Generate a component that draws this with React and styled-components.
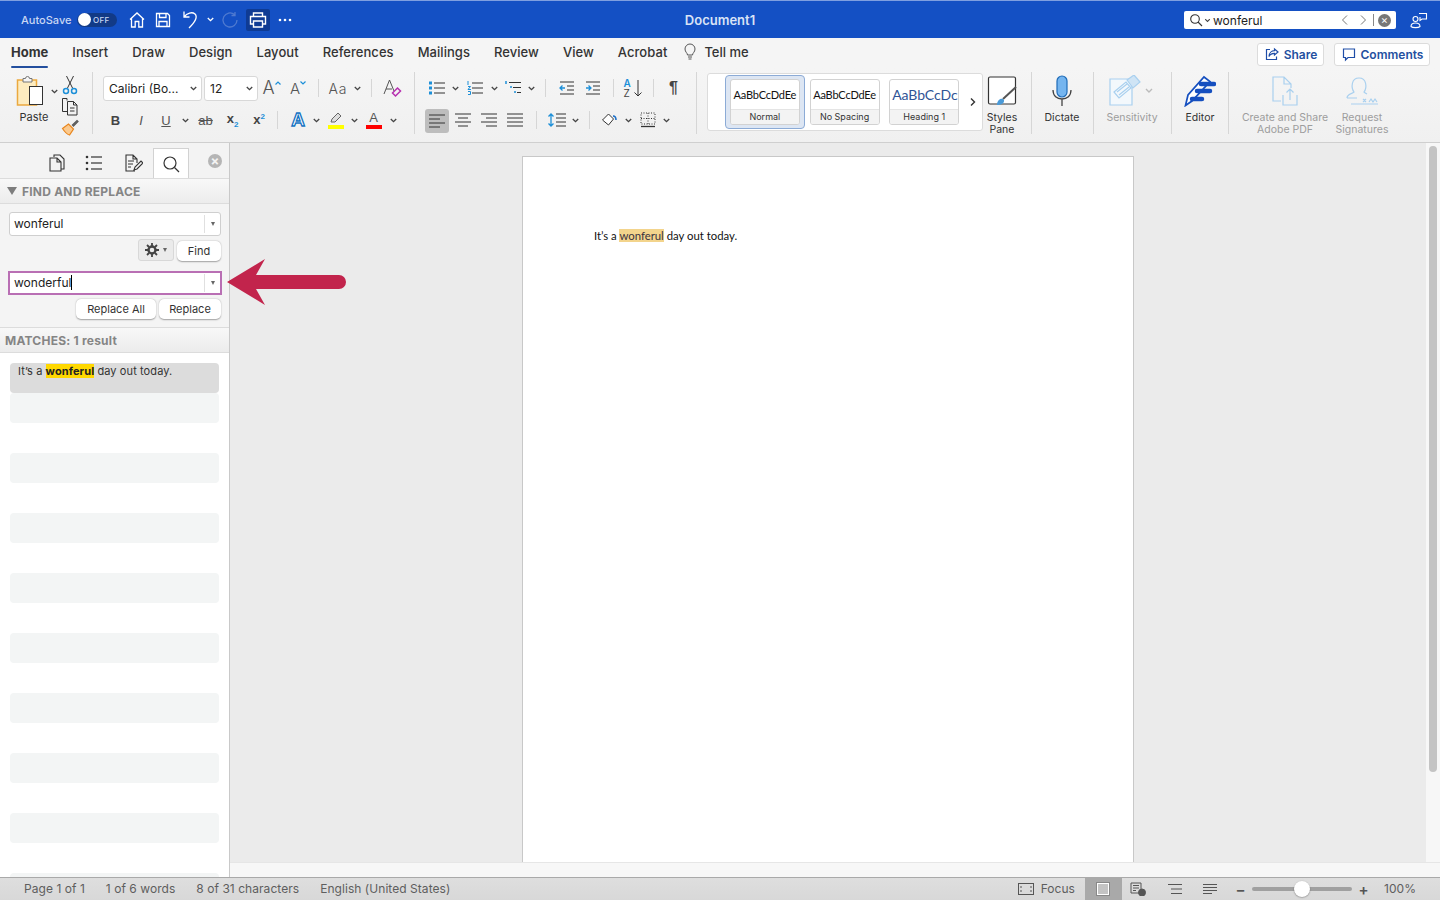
import React from "react";
import styled, { createGlobalStyle } from "styled-components";

const GlobalStyle = createGlobalStyle`
  html, body { margin: 0; height: 100%; overflow: hidden; }
  body { font-family: Inter, "Open Sans", sans-serif; color: #2b2b2b; }
  * { box-sizing: border-box; }
  svg { flex: none; }
`;

const Chev = ({ color = "#444" }) => (
  <svg width="7" height="5" viewBox="0 0 9 6"><path d="M1 1l3.500 3.500L8 1" fill="none" stroke={color} strokeWidth="1.700" /></svg>
);

const Ico = ({ w = 20, h = 20, children, stroke = "#333", sw = 1.2 }) => (
  <svg width={w} height={h} viewBox={`0 0 ${w} ${h}`} fill="none" stroke={stroke} strokeWidth={sw}>{children}</svg>
);

const lines = (ys, x1, x2, color) => ys.map((y, i) => <path key={i} d={`M${Array.isArray(x1) ? x1[i] : x1} ${y}H${Array.isArray(x2) ? x2[i] : x2}`} stroke={color} />);

const tabs = ["Home", "Insert", "Draw", "Design", "Layout", "References", "Mailings", "Review", "View", "Acrobat"];

export default function App() {
  return (
    <Screen>
      <GlobalStyle />
      <TitleBar>
        <AutoSave>AutoSave</AutoSave>
        <Toggle><Knob /><ToggleText>OFF</ToggleText></Toggle>
        <TitleTool $w={26} $ml={7}>
          <Ico stroke="#fff" sw={1.3}><path d="M3 9.500L10 3l7 6.500M4.500 8.500V17h3.700v-5.500h3.600V17h3.700V8.500" /></Ico>
        </TitleTool>
        <TitleTool $w={26}>
          <Ico stroke="#fff" sw={1.3}><path d="M3.500 3.500h11l2 2v11h-13zM6.500 3.500v4h6.500v-4M6 16.500v-5h8v5" /></Ico>
        </TitleTool>
        <TitleTool $w={30}>
          <Ico stroke="#fff" sw={1.3}><path d="M3 1.500V7h5.500M3 7c3-4 8-5.500 11-3 3 3 0 8-6 14" /></Ico>
        </TitleTool>
        <TitleTool $w={8}><Chev color="#fff" /></TitleTool>
        <TitleTool $w={32}>
          <Ico stroke="#4f7ad0" sw={1.3}><path d="M17 10a7 7 0 1 1-2.500-5.400M15 2v3.500h-3.500" /></Ico>
        </TitleTool>
        <PrintBtn>
          <Ico stroke="#fff" sw={1.4}><path d="M5.500 6V3h9v3M5 14H2.500V6.500h15V14H15M5.500 11h9v6h-9z" /></Ico>
        </PrintBtn>
        <Dots>
          <Ico w={14} h={4} stroke="none"><circle cx="2" cy="2" r="1.300" fill="#fff" /><circle cx="7" cy="2" r="1.300" fill="#fff" /><circle cx="12" cy="2" r="1.300" fill="#fff" /></Ico>
        </Dots>
        <DocTitle>Document1</DocTitle>
        <TopSearch>
          <Ico w={14} h={14} stroke="#333" sw={1.1}><circle cx="6" cy="6" r="4.300" /><path d="M9 9l4 4" /></Ico>
          <SearchChev><Chev /></SearchChev>
          <SearchText>wonferul</SearchText>
          <Ico w={10} h={12} stroke="#777" sw={1}><path d="M7 1.500L2.500 6 7 10.500" /></Ico>
          <SearchNext><Ico w={10} h={12} stroke="#777" sw={1}><path d="M3 1.500L7.500 6 3 10.500" /></Ico></SearchNext>
          <SearchSep />
          <SearchClear>×</SearchClear>
        </TopSearch>
        <PeopleIcon>
          <Ico w={18} h={18} stroke="#fff" sw={1.1}><circle cx="5.500" cy="8" r="2.500" /><path d="M1 15.500c0-2.500 2-3.500 4.500-3.500s4.500 1 4.500 3.500c-1.500 1.500-7.500 1.500-9 0zM9 2.500h7.500V8H12l-2 1.500V6" /></Ico>
        </PeopleIcon>
      </TitleBar>

      <TabBar>
        {tabs.map((t, i) => <Tab key={t} $active={i === 0}>{t}</Tab>)}
        <TellMe>
          <Ico w={14} h={18} stroke="#555" sw={1}><path d="M4.500 12c0-2-2.500-3-2.500-6a5 5 0 0 1 10 0c0 3-2.500 4-2.500 6zM5 14h4M5.500 16h3" /></Ico>
          <span>Tell me</span>
        </TellMe>
        <TabActions>
          <ActionBtn $w={67}>
            <Ico w={16} h={16} stroke="#1f4ea8" sw={1.2}><path d="M10.500 3l3.500 3-3.500 3V7.300C8 7.300 6 8.500 5 10.500 5 7 7.500 4.800 10.500 4.700zM6 3.500H2.500v10h10v-3" /></Ico>
            Share
          </ActionBtn>
          <ActionBtn $w={96}>
            <Ico w={16} h={16} stroke="#1f4ea8" sw={1.2}><path d="M2.500 3h11v8.500H7L4.500 14v-2.500h-2z" /></Ico>
            Comments
          </ActionBtn>
        </TabActions>
      </TabBar>

      <Ribbon>
        <Group $w={93}>
          <PasteWrap>
            <PasteMain>
              <svg width="32" height="32" viewBox="0 0 32 32" fill="none">
                <rect x="1.500" y="5" width="19" height="25" fill="#fdecc0" stroke="#eba93f" strokeWidth="1.500" />
                <path d="M7 5V3.500h2.500a2 2 0 0 1 4 0H16V7H7z" fill="#f5f5f5" stroke="#777" />
                <rect x="13.500" y="11.500" width="13" height="18" fill="#fff" stroke="#333" />
              </svg>
              <Chev />
              <PasteLabel>Paste</PasteLabel>
            </PasteMain>
            <ClipColumn>
              <Ico w={16} h={20} stroke="#333" sw={1}>
                <path d="M4.500 1l6 12M11.500 1l-6 12" />
                <circle cx="4" cy="16" r="2.500" stroke="#1c8fd8" strokeWidth="1.500" />
                <circle cx="12" cy="16" r="2.500" stroke="#1c8fd8" strokeWidth="1.500" />
              </Ico>
              <Ico w={18} h={20} stroke="#333" sw={1}>
                <path d="M6 3.500V1.500H1.500v13H6M6.500 4.500h6l3.500 3.500v10H6.500zM12.500 4.500V8H16M9 11h4.500M9 14h4.500" />
              </Ico>
              <Ico w={18} h={18} stroke="#e8861e" sw={1.2}>
                <path d="M1.500 9.500l6-4.500 5 5-4 6c-2.500-.5-5-3.500-7-6.500z" fill="#fbc98d" />
                <path d="M11 6.500l5-5 1 1-5 5" stroke="#555" />
              </Ico>
            </ClipColumn>
          </PasteWrap>
        </Group>

        <Group $w={322} $pl={10}>
          <ToolRow>
            <Select $w={99}><span>Calibri (Bo...</span><Chev /></Select>
            <Select $w={54} $ml={2}><span>12</span><Chev /></Select>
            <Tool $w={27}>
              <BigLetter>A</BigLetter>
              <CaretMark><Ico w={6} h={4} stroke="#1c8fd8" sw={1.200}><path d="M.5 3.500L3 1l2.500 2.500" /></Ico></CaretMark>
            </Tool>
            <Tool $w={26}>
              <BigLetter $s={15}>A</BigLetter>
              <CaretMark><Ico w={6} h={4} stroke="#1c8fd8" sw={1.200}><path d="M.5 .5L3 3l2.500-2.500" /></Ico></CaretMark>
            </Tool>
            <Sep $w={14} />
            <Tool $w={26}><AaLabel>Aa</AaLabel></Tool>
            <Tool $w={13}><Chev /></Tool>
            <Sep $w={14} />
            <Tool $w={28}>
              <Ico w={20} h={20} stroke="#555" sw={1}>
                <path d="M2 16L7.500 2 12 13M4 11h6" />
                <path d="M10.500 15l5-5 3 3-5 5z" stroke="#b72fb0" strokeWidth="1.500" />
              </Ico>
            </Tool>
          </ToolRow>
          <ToolRow>
            <Tool $w={25}><Letter $b>B</Letter></Tool>
            <Tool $w={26}><Letter $i $light>I</Letter></Tool>
            <Tool $w={24}><Letter $u $light>U</Letter></Tool>
            <Tool $w={14}><Chev /></Tool>
            <Tool $w={27}><Letter $strike $light>ab</Letter></Tool>
            <Tool $w={27}><Letter $b>x<Sub>2</Sub></Letter></Tool>
            <Tool $w={26}><Letter $b>x<Sup>2</Sup></Letter></Tool>
            <Sep $w={10} />
            <Tool $w={32}><OutlineA>A</OutlineA></Tool>
            <Tool $w={4}><Chev /></Tool>
            <Tool $w={36}>
              <ColorMark>
                <Ico w={16} h={12} stroke="#666" sw={1}><path d="M3 10l1-3 6-6 3 3-6 6z" fill="#ddd" /></Ico>
                <ColorBar $c="#ffff00" />
              </ColorMark>
            </Tool>
            <Tool $w={0}><Chev /></Tool>
            <Tool $w={39}>
              <ColorMark><Letter $s={13} $light>A</Letter><ColorBar $c="#ff0000" /></ColorMark>
            </Tool>
            <Tool $w={0}><Chev /></Tool>
          </ToolRow>
        </Group>

        <Group $w={282} $pl={10}>
          <ToolRow>
            <Tool $w={23}>
              <Ico w={18} h={16} sw={1}>
                <rect x="1" y="1.500" width="3" height="3" fill="#1c8fd8" stroke="none" />
                <rect x="1" y="6.500" width="3" height="3" fill="#1c8fd8" stroke="none" />
                <rect x="1" y="11.500" width="3" height="3" fill="#1c8fd8" stroke="none" />
                {lines([3, 8, 13], 6, 17, "#333")}
              </Ico>
            </Tool>
            <Tool $w={14}><Chev /></Tool>
            <Tool $w={26}>
              <Ico w={18} h={16} sw={1}>
                <path d="M2 1v4M2 6.500h2.500L2 9.500h3M2 11.500h2.500v3H2" stroke="#1c8fd8" />
                {lines([3, 8, 13], 6, 17, "#333")}
              </Ico>
            </Tool>
            <Tool $w={12}><Chev /></Tool>
            <Tool $w={26}>
              <Ico w={18} h={16} sw={1}>
                <path d="M2 1v3M6 7h2M10 12h2" stroke="#1c8fd8" strokeWidth="1.500" />
                {lines([2.500, 7.500, 12.500], [5, 9, 13], 17, "#333")}
              </Ico>
            </Tool>
            <Tool $w={10}><Chev /></Tool>
            <Sep $w={18} />
            <Tool $w={25}>
              <Ico w={16} h={14} sw={1}>
                <path d="M6 7H1M3.500 4.500L1 7l2.500 2.500" stroke="#1c8fd8" strokeWidth="1.300" />
                {lines([1, 5, 9, 13], [1, 8, 8, 1], 15, "#333")}
              </Ico>
            </Tool>
            <Tool $w={27}>
              <Ico w={16} h={14} sw={1}>
                <path d="M1 7h5M3.500 4.500L6 7 3.500 9.500" stroke="#1c8fd8" strokeWidth="1.300" />
                {lines([1, 5, 9, 13], [1, 8, 8, 1], 15, "#333")}
              </Ico>
            </Tool>
            <Sep $w={14} />
            <Tool $w={26}>
              <SortMark><span>A</span><i>Z</i>
                <Ico w={10} h={20} stroke="#333" sw={1}><path d="M5 2v16M1.500 14.500L5 18l3.500-3.500" /></Ico>
              </SortMark>
            </Tool>
            <Sep $w={14} />
            <Tool $w={27}><Letter $s={16} $b>¶</Letter></Tool>
          </ToolRow>
          <ToolRow>
            <Tool $w={24} $active>
              <Ico w={18} h={14} sw={1}>{lines([1, 5, 9, 13], 1, [17, 12, 17, 12], "#333")}</Ico>
            </Tool>
            <Tool $w={28}>
              <Ico w={18} h={14} sw={1}>{lines([1, 5, 9, 13], [1, 4, 1, 4], [17, 14, 17, 14], "#333")}</Ico>
            </Tool>
            <Tool $w={24}>
              <Ico w={18} h={14} sw={1}>{lines([1, 5, 9, 13], [1, 6, 1, 6], 17, "#333")}</Ico>
            </Tool>
            <Tool $w={28}>
              <Ico w={18} h={14} sw={1}>{lines([1, 5, 9, 13], 1, 17, "#333")}</Ico>
            </Tool>
            <Sep $w={14} />
            <Tool $w={28}>
              <Ico w={20} h={16} sw={1}>
                <path d="M4 2v12M1.500 4.500L4 2l2.500 2.500M1.500 11.500L4 14l2.500-2.500" stroke="#1c8fd8" strokeWidth="1.300" />
                {lines([2, 6, 10, 14], 9, 19, "#333")}
              </Ico>
            </Tool>
            <Tool $w={8}><Chev /></Tool>
            <Sep $w={20} />
            <Tool $w={22}>
              <Ico w={18} h={16} sw={1}>
                <path d="M1.500 8l6-6 5 5-5 6z" fill="#fff" />
                <path d="M12 4c2 0 3 2 3 4" stroke="#1c6fc8" strokeWidth="1.600" />
              </Ico>
            </Tool>
            <Tool $w={14}><Chev /></Tool>
            <Tool $w={26}>
              <Ico w={16} h={16} sw={1}>
                <path d="M1 1h14v11H1zM8 1v11M1 6.500h14" strokeDasharray="1 1.500" />
                <path d="M1 14.500h14" strokeWidth="1.300" />
              </Ico>
            </Tool>
            <Tool $w={10}><Chev /></Tool>
          </ToolRow>
        </Group>

        <Group $w={335} $pl={10} $row>
          <Gallery>
            <StyleSlot $selected>
              <StyleCard><Preview>AaBbCcDdEe</Preview><StyleName>Normal</StyleName></StyleCard>
            </StyleSlot>
            <StyleSlot>
              <StyleCard><Preview>AaBbCcDdEe</Preview><StyleName>No Spacing</StyleName></StyleCard>
            </StyleSlot>
            <StyleSlot>
              <StyleCard><Preview $heading>AaBbCcDc</Preview><StyleName>Heading 1</StyleName></StyleCard>
            </StyleSlot>
            <GalleryArrow>
              <Ico w={8} h={10} stroke="#333" sw={1.400}><path d="M2 1.500L5.500 5 2 8.500" /></Ico>
            </GalleryArrow>
          </Gallery>
          <BigTool $w={38}>
            <BigIcon>
              <svg width="32" height="34" viewBox="0 0 32 34" fill="none">
                <rect x="2.500" y="3" width="27" height="27" rx="1.500" fill="#fff" stroke="#333" strokeWidth="1.200" />
                <path d="M30 13L17 25" stroke="#555" strokeWidth="2" />
                <path d="M11 31c0-4 3-7 6-6 2 1 1 4-1 5-1.500.8-3.500 1-5 1z" fill="#4a9ad8" />
              </svg>
            </BigIcon>
            <BigLabel>Styles<br />Pane</BigLabel>
          </BigTool>
        </Group>

        <Group $w={62} $center>
          <BigTool $w={60}>
            <BigIcon>
              <svg width="22" height="32" viewBox="0 0 22 32" fill="none">
                <rect x="6" y="1" width="10" height="21" rx="5" fill="#75b5ef" stroke="#1f6cb8" strokeWidth="1.200" />
                <path d="M2 15c0 6 4 9 9 9s9-3 9-9M11 24v7" stroke="#444" strokeWidth="1.300" />
              </svg>
            </BigIcon>
            <BigLabel>Dictate</BigLabel>
          </BigTool>
        </Group>

        <Group $w={78} $center>
          <BigTool $w={76}>
            <BigIcon>
              <svg width="46" height="32" viewBox="0 0 46 32" fill="none" stroke="#a9d0ef" strokeWidth="1.200">
                <path d="M1 4h22v26H1z" fill="#f3f8fc" />
                <path d="M5 17L17 7l5 6-12 10z" fill="#f3f8fc" />
                <path d="M8 17l10-8M10 20l10-8" />
                <path d="M18 5l7-5 6 7-7 6z" fill="#cfe4f5" />
                <path d="M37 14l3 3 3-3" stroke="#bbb" strokeWidth="1.400" />
              </svg>
            </BigIcon>
            <BigLabel $off>Sensitivity</BigLabel>
          </BigTool>
        </Group>

        <Group $w={57} $center>
          <BigTool $w={56}>
            <BigIcon>
              <svg width="32" height="32" viewBox="0 0 32 32" fill="none">
                <path d="M1.500 30.500L4 20 20 2l6 4.500L8 26z" fill="#fff" stroke="#154fbf" strokeWidth="1.700" />
                <path d="M17 9h13M13 16h13M8 24h10" stroke="#154fbf" strokeWidth="4.500" strokeLinecap="round" />
              </svg>
            </BigIcon>
            <BigLabel>Editor</BigLabel>
          </BigTool>
        </Group>

        <Group $w={211} $row $last $pl={6}>
          <BigTool $w={100}>
            <BigIcon>
              <svg width="28" height="32" viewBox="0 0 28 32" fill="none" stroke="#a9d0ef" strokeWidth="1.200">
                <path d="M10 26H2V2h11l7 7v4M13 2v7h7" />
                <path d="M12 20v10h14V20M19 25V14M15.500 17.500L19 14l3.500 3.500" />
              </svg>
            </BigIcon>
            <BigLabel $off>Create and Share<br />Adobe PDF</BigLabel>
          </BigTool>
          <BigTool $w={54}>
            <BigIcon>
              <svg width="34" height="30" viewBox="0 0 34 30" fill="none" stroke="#a9d0ef" strokeWidth="1.200">
                <path d="M2 22c0-4 5-4 7-6-3-4-3-14 5-14s8 10 5 14c1 1 2 1.500 3 2M2 22h10M6 28h27" />
                <path d="M18 23l3 3M21 23l-3 3M24 26l2-3 2 3 2-3 2 3" />
              </svg>
            </BigIcon>
            <BigLabel $off>Request<br />Signatures</BigLabel>
          </BigTool>
        </Group>
      </Ribbon>

      <Body>
        <Sidebar>
          <PaneTabs>
            <PaneTab>
              <Ico sw={1.1}><path d="M7 4V2h6l4 4v10h-3M3 5h7l4 4v9H3zM10 5v4h4" /></Ico>
            </PaneTab>
            <PaneTab $w={42}>
              <Ico sw={1.2}>
                <circle cx="3" cy="4" r="1.300" fill="#333" stroke="none" />
                <circle cx="3" cy="10" r="1.300" fill="#333" stroke="none" />
                <circle cx="3" cy="16" r="1.300" fill="#333" stroke="none" />
                {lines([4, 10, 16], 7, 18, "#333")}
              </Ico>
            </PaneTab>
            <PaneTab $w={36}>
              <Ico sw={1.1}><path d="M12 18H3V2h7l4 4v4M10 2v4h4M5 8h6M5 11h5M5 14h3M11 17l1-3 6-6 2 2-6 6z" /></Ico>
            </PaneTab>
            <PaneTab $w={36} $active>
              <Ico sw={1.2}><circle cx="9" cy="9" r="6" /><path d="M13.500 13.500L18 18" /></Ico>
            </PaneTab>
            <PaneClose>×</PaneClose>
          </PaneTabs>

          <SectionHead $h={26}><Triangle />FIND AND REPLACE</SectionHead>
          <FindSection>
            <Field $ml={9} $w={212}><FieldText>wonferul</FieldText><FieldDrop /></Field>
            <FindActions>
              <GearBtn>
                <Ico w={14} h={14} stroke="#444" sw={2.400}>
                  <circle cx="7" cy="7" r="3.500" />
                  <path d="M7 0v3M7 11v3M0 7h3M11 7h3M2 2l2 2M10 10l2 2M2 12l2-2M10 4l2-2" strokeWidth="1.800" />
                </Ico>
                <SmallCaret />
              </GearBtn>
              <PaneBtn $w={44}>Find</PaneBtn>
            </FindActions>
            <Field $ml={8} $w={214} $focus $mt={10}>
              <FieldText>wonderful<Cursor /></FieldText><FieldDrop />
            </Field>
            <ReplaceActions>
              <PaneBtn $w={80}>Replace All</PaneBtn>
              <PaneBtn $w={62}>Replace</PaneBtn>
            </ReplaceActions>
          </FindSection>
          <SectionHead $h={26} $flat>MATCHES: 1 result</SectionHead>
          <Results>
            <Result $selected>
              It’s a <Mark>wonferul</Mark> day out today.
            </Result>
            {Array.from({ length: 17 }).map((_, i) => <Result key={i} $blank={i % 2 === 1} />)}
          </Results>
        </Sidebar>

        <Workspace>
          <WorkTop>
            <Canvas>
              <Page>
                <DocLine>It’s a <DocMark>wonferul</DocMark> day out today.</DocLine>
              </Page>
            </Canvas>
            <VScroll><Thumb /></VScroll>
          </WorkTop>
          <HScroll />
        </Workspace>

        <Arrow width="120" height="46" viewBox="0 0 120 46">
          <path d="M0 23L38 0 29 16H112a7 7 0 0 1 0 14H29l9 16z" fill="#c2244c" />
        </Arrow>
      </Body>

      <StatusBar>
        <StatusLeft>
          <span>Page 1 of 1</span>
          <span>1 of 6 words</span>
          <span>8 of 31 characters</span>
          <span>English (United States)</span>
        </StatusLeft>
        <StatusRight>
          <Ico w={16} h={12} stroke="#555" sw={1}><rect x="0.500" y="0.500" width="15" height="11" /><path d="M3 3v2M13 3v2M3 7v2M13 7v2" /></Ico>
          <FocusText>Focus</FocusText>
          <ViewBtn $active>
            <Ico w={14} h={14} stroke="#888" sw={1}><rect x="0.500" y="0.500" width="13" height="13" fill="#fff" />{lines([3, 5, 7, 9, 11], 2, 12, "#888")}</Ico>
          </ViewBtn>
          <ViewBtn $w={33}>
            <Ico w={16} h={14} stroke="#555" sw={1}><path d="M1 1h10v10H1zM3 3.500h6M3 6h6M3 8.500h3" /><circle cx="12" cy="10.500" r="3.500" fill="#555" /></Ico>
          </ViewBtn>
          <ViewBtn $w={40}>
            <Ico w={16} h={12} stroke="#555" sw={1}>{lines([1.500, 6, 10.500], [1, 4, 4], 15, "#555")}</Ico>
          </ViewBtn>
          <ViewBtn $w={30}>
            <Ico w={14} h={12} stroke="#555" sw={1}>{lines([1.500, 4.500, 7.500, 10.500], 0, [14, 14, 14, 9], "#555")}</Ico>
          </ViewBtn>
          <ZoomSign $ml={10}>−</ZoomSign>
          <Slider><SliderKnob /></Slider>
          <ZoomSign>+</ZoomSign>
          <ZoomValue>100%</ZoomValue>
        </StatusRight>
      </StatusBar>
    </Screen>
  );
}

const Screen = styled.div`
  position: relative;
  display: flex;
  flex-direction: column;
  width: 1440px;
  height: 900px;
  overflow: hidden;
  background: #f5f5f5;
`;

const TitleBar = styled.header`
  position: relative;
  display: flex;
  align-items: center;
  flex: 0 0 38px;
  padding-left: 21px;
  background: #1450c4;
  border-top: 1px solid #7f9fe0;
  color: #fff;
`;

const AutoSave = styled.span`
  font-size: 11px;
  font-weight: 500;
  color: #c9d7f3;
  width: 56px;
`;

const Toggle = styled.div`
  display: flex;
  align-items: center;
  width: 40px;
  height: 14px;
  border-radius: 7px;
  background: #123a86;
  padding-left: 1px;
`;

const Knob = styled.span`
  width: 13px;
  height: 13px;
  border-radius: 50%;
  background: #fff;
`;

const ToggleText = styled.span`
  font-size: 8px;
  font-weight: 500;
  color: #c9d7f3;
  margin-left: 2px;
  letter-spacing: 0.3px;
`;

const TitleTool = styled.div`
  display: flex;
  align-items: center;
  justify-content: center;
  width: ${(p) => p.$w}px;
  margin-left: ${(p) => p.$ml || 0}px;
`;

const PrintBtn = styled.div`
  display: flex;
  align-items: center;
  justify-content: center;
  width: 24px;
  height: 22px;
  border-radius: 2px;
  background: #0f3b94;
`;

const Dots = styled.span`
  display: flex;
  margin-left: 8px;
`;

const DocTitle = styled.div`
  position: absolute;
  left: 0;
  right: 0;
  margin-top: 1px;
  text-align: center;
  font-size: 13px;
  font-weight: 600;
  color: #d9e3f6;
  pointer-events: none;
`;

const TopSearch = styled.div`
  position: relative;
  display: flex;
  align-items: center;
  width: 212px;
  height: 18px;
  margin: 1px 0 0 auto;
  padding-left: 5px;
  background: #fff;
  border-radius: 2px;
  color: #222;
`;

const SearchChev = styled.span`
  display: flex;
  margin-left: 1px;
  transform: scale(0.85);
`;

const SearchText = styled.span`
  font-size: 12px;
  width: 127px;
  margin-left: 2px;
`;

const SearchNext = styled.span`
  display: flex;
  margin-left: 8px;
`;

const SearchSep = styled.span`
  width: 1px;
  height: 12px;
  background: #888;
  margin-left: 5px;
`;

const SearchClear = styled.span`
  display: flex;
  align-items: center;
  justify-content: center;
  width: 13px;
  height: 13px;
  margin-left: 4px;
  border-radius: 50%;
  background: #777;
  color: #fff;
  font-size: 11px;
  line-height: 1;
`;

const PeopleIcon = styled.div`
  display: flex;
  width: 18px;
  margin: 0 12px 0 14px;
`;

const TabBar = styled.nav`
  display: flex;
  align-items: center;
  flex: 0 0 30px;
  padding: 0 0 2px 11px;
  background: #f5f5f5;
`;

const Tab = styled.span`
  position: relative;
  margin-right: 24px;
  font-size: 13px;
  font-weight: ${(p) => (p.$active ? 700 : 500)};
  letter-spacing: ${(p) => (p.$active ? "0" : "0.05px")};
  color: #333;
  ${(p) =>
    p.$active &&
    `&::after {
      content: "";
      position: absolute;
      left: 0;
      right: 0;
      bottom: -8px;
      height: 2px;
      border-radius: 1px;
      background: #234f9e;
    }`}
`;

const TellMe = styled.div`
  display: flex;
  align-items: center;
  gap: 7px;
  margin-left: -8px;
  font-size: 13px;
  font-weight: 500;
  color: #333;
`;

const TabActions = styled.div`
  display: flex;
  gap: 10px;
  margin: 4px 10px 0 auto;
`;

const ActionBtn = styled.div`
  display: flex;
  align-items: center;
  justify-content: center;
  gap: 4px;
  width: ${(p) => p.$w}px;
  height: 23px;
  background: #fff;
  border: 1px solid #dcdcdc;
  border-radius: 3px;
  font-size: 12px;
  font-weight: 600;
  color: #24509f;
`;

const Ribbon = styled.section`
  display: flex;
  flex: 0 0 75px;
  background: linear-gradient(#f5f5f5, #f0f0f0);
  border-bottom: 1px solid #cfcfcf;
`;

const Group = styled.div`
  display: flex;
  flex-direction: ${(p) => (p.$row ? "row" : "column")};
  gap: 6px;
  width: ${(p) => p.$w}px;
  height: 62px;
  margin-top: 4px;
  padding-left: ${(p) => p.$pl || 0}px;
  padding-top: ${(p) => (p.$row ? 1 : 3)}px;
  border-right: ${(p) => (p.$last ? "none" : "1px solid #d6d6d6")};
  ${(p) => p.$row && "gap: 0;"}
  ${(p) => p.$center && "padding-top: 1px;"}
`;

const PasteWrap = styled.div`
  display: flex;
  height: 60px;
`;

const PasteMain = styled.div`
  position: relative;
  display: flex;
  flex-wrap: wrap;
  align-items: center;
  align-content: flex-start;
  width: 60px;
  padding-left: 16px;
  gap: 0 3px;
`;

const PasteLabel = styled.span`
  width: 36px;
  margin-top: 3px;
  font-size: 11px;
  text-align: center;
  color: #333;
`;

const ClipColumn = styled.div`
  display: flex;
  flex-direction: column;
  align-items: center;
  gap: 2px;
  width: 20px;
`;

const ToolRow = styled.div`
  display: flex;
  align-items: center;
  height: 26px;
`;

const Select = styled.div`
  display: flex;
  align-items: center;
  justify-content: space-between;
  flex: none;
  width: ${(p) => p.$w}px;
  height: 25px;
  margin-left: ${(p) => p.$ml || 0}px;
  padding: 0 4px 0 5px;
  background: #fff;
  border: 1px solid #d8d8d8;
  border-radius: 3px;
  font-size: 12px;
  color: #222;
`;

const Tool = styled.div`
  display: flex;
  align-items: center;
  justify-content: center;
  flex: none;
  width: ${(p) => p.$w}px;
  height: 24px;
  border-radius: 3px;
  background: ${(p) => (p.$active ? "#bdbdbd" : "transparent")};
  ${(p) => p.$active && "margin-top: 1px;"}
`;

const Sep = styled.span`
  position: relative;
  flex: none;
  width: ${(p) => p.$w}px;
  height: 18px;
  &::after {
    content: "";
    position: absolute;
    left: 50%;
    top: 0;
    bottom: 0;
    width: 1px;
    background: #d6d6d6;
  }
`;

const Letter = styled.span`
  font-family: "Liberation Sans", sans-serif;
  font-size: ${(p) => p.$s || 13}px;
  font-weight: ${(p) => (p.$b ? 700 : 400)};
  font-style: ${(p) => (p.$i ? "italic" : "normal")};
  color: ${(p) => (p.$light ? "#555" : "#444")};
  text-decoration: ${(p) => (p.$u ? "underline" : p.$strike ? "line-through" : "none")};
`;

const AaLabel = styled.span`
  font-size: 14px;
  font-weight: 300;
  letter-spacing: 1px;
  color: #555;
`;

const BigLetter = styled.span`
  font-size: ${(p) => p.$s || 18}px;
  font-weight: 300;
  color: #555;
  line-height: 1;
`;

const CaretMark = styled.span`
  display: flex;
  align-self: flex-start;
  margin-top: 5px;
`;

const Sub = styled.sub`
  font-size: 8px;
  color: #1c8fd8;
`;

const Sup = styled.sup`
  font-size: 8px;
  color: #1c8fd8;
`;

const OutlineA = styled.span`
  font-family: "Liberation Sans", sans-serif;
  font-size: 19px;
  font-weight: 700;
  color: #fff;
  -webkit-text-stroke: 1.3px #1272c2;
`;

const ColorMark = styled.div`
  display: flex;
  flex-direction: column;
  align-items: center;
  width: 16px;
  line-height: 1;
`;

const ColorBar = styled.span`
  width: 16px;
  height: 4px;
  margin-top: 1px;
  background: ${(p) => p.$c};
`;

const SortMark = styled.div`
  display: grid;
  grid-template-columns: 9px 10px;
  grid-template-rows: 10px 10px;
  font-size: 10px;
  line-height: 10px;
  span { color: #1c8fd8; font-weight: 600; }
  i { grid-row: 2; font-style: normal; color: #444; }
  svg { grid-column: 2; grid-row: 1 / 3; }
`;

const Gallery = styled.div`
  display: flex;
  align-items: center;
  flex: none;
  width: 276px;
  height: 58px;
  padding-left: 17px;
  background: #fff;
  border: 1px solid #dcdcdc;
  border-radius: 3px;
`;

const StyleSlot = styled.div`
  display: flex;
  align-items: center;
  justify-content: center;
  width: 80px;
  height: 54px;
  border-radius: 4px;
  border: 1px solid ${(p) => (p.$selected ? "#8cabd6" : "transparent")};
  background: ${(p) => (p.$selected ? "#dde6f3" : "transparent")};
`;

const StyleCard = styled.div`
  display: flex;
  flex-direction: column;
  width: 70px;
  height: 46px;
  overflow: hidden;
  background: #fff;
  border: 1px solid #d2d2d2;
  border-radius: 3px;
`;

const Preview = styled.div`
  flex: 1;
  display: flex;
  align-items: center;
  justify-content: ${(p) => (p.$heading ? "flex-start" : "center")};
  padding-left: ${(p) => (p.$heading ? "2px" : 0)};
  white-space: nowrap;
  font-family: Lato, sans-serif;
  font-size: ${(p) => (p.$heading ? "14px" : "11px")};
  letter-spacing: ${(p) => (p.$heading ? "-0.1px" : "-0.2px")};
  color: ${(p) => (p.$heading ? "#2f5496" : "#111")};
`;

const StyleName = styled.div`
  flex: 0 0 15px;
  text-align: center;
  font-size: 9px;
  line-height: 14px;
  color: #333;
  background: #f3f3f3;
  border-top: 1px solid #e4e4e4;
`;

const GalleryArrow = styled.div`
  display: flex;
  justify-content: center;
  width: 18px;
`;

const BigTool = styled.div`
  display: flex;
  flex-direction: column;
  align-items: center;
  flex: none;
  width: ${(p) => p.$w}px;
`;

const BigIcon = styled.div`
  display: flex;
  align-items: center;
  justify-content: center;
  flex: none;
  height: 38px;
  margin-top: 1px;
  padding-bottom: 4px;
`;

const BigLabel = styled.div`
  font-size: 10.5px;
  line-height: 12px;
  text-align: center;
  white-space: nowrap;
  color: ${(p) => (p.$off ? "#9d9d9d" : "#333")};
`;

const Body = styled.main`
  position: relative;
  display: flex;
  flex: 1;
  min-height: 0;
`;

const Sidebar = styled.aside`
  display: flex;
  flex-direction: column;
  flex: 0 0 230px;
  background: #fff;
  border-right: 1px solid #c9c9c9;
  overflow: hidden;
`;

const PaneTabs = styled.div`
  position: relative;
  display: flex;
  align-items: flex-end;
  flex: 0 0 35px;
  padding-left: 41px;
  background: #f3f3f3;
`;

const PaneTab = styled.div`
  display: flex;
  align-items: center;
  justify-content: center;
  width: ${(p) => p.$w || 32}px;
  height: 30px;
  ${(p) =>
    p.$active &&
    `background: #fff;
     border: 1px solid #d2d2d2;
     border-bottom: none;
     margin-left: 2px;`}
`;

const PaneClose = styled.span`
  display: flex;
  align-items: center;
  justify-content: center;
  align-self: flex-start;
  width: 14px;
  height: 14px;
  margin: 11px 0 0 19px;
  border-radius: 50%;
  background: #b5b5b5;
  color: #f3f3f3;
  font-size: 13px;
  font-weight: 700;
  line-height: 1;
`;

const SectionHead = styled.div`
  display: flex;
  align-items: center;
  flex: 0 0 ${(p) => p.$h}px;
  padding-left: ${(p) => (p.$flat ? 5 : 7)}px;
  gap: 5px;
  background: linear-gradient(#f8f8f8, #ececec);
  border-top: 1px solid #dcdcdc;
  border-bottom: 1px solid #dcdcdc;
  font-size: 12px;
  font-weight: 700;
  letter-spacing: 0.22px;
  color: #858585;
`;

const Triangle = styled.span`
  width: 0;
  height: 0;
  border-left: 5px solid transparent;
  border-right: 5px solid transparent;
  border-top: 8px solid #7d7d7d;
`;

const FindSection = styled.div`
  display: flex;
  flex-direction: column;
  flex: 0 0 123px;
  padding-top: 8px;
  background: #f4f4f4;
`;

const Field = styled.div`
  display: flex;
  align-items: center;
  flex: none;
  width: ${(p) => p.$w}px;
  height: 24px;
  margin-left: ${(p) => p.$ml}px;
  margin-top: ${(p) => p.$mt || 0}px;
  padding-left: 4px;
  background: #fff;
  border: ${(p) => (p.$focus ? "2px solid #b96fb4" : "1px solid #cfcfcf")};
  border-radius: ${(p) => (p.$focus ? 0 : 3)}px;
`;

const FieldText = styled.span`
  display: flex;
  align-items: center;
  flex: 1;
  padding-bottom: 2px;
  font-size: 12px;
  color: #222;
`;

const Cursor = styled.span`
  width: 1px;
  height: 15px;
  background: #000;
`;

const FieldDrop = styled.span`
  position: relative;
  width: 16px;
  height: 18px;
  border-left: 1px solid #e0e0e0;
  &::after {
    content: "";
    position: absolute;
    left: 6px;
    top: 7px;
    border-left: 2.5px solid transparent;
    border-right: 2.5px solid transparent;
    border-top: 4px solid #666;
  }
`;

const FindActions = styled.div`
  display: flex;
  align-items: flex-end;
  justify-content: flex-end;
  gap: 3px;
  margin: 3px 8px 0 0;
  height: 22px;
`;

const ReplaceActions = styled.div`
  display: flex;
  justify-content: flex-end;
  gap: 3px;
  margin: 4px 8px 0 0;
`;

const GearBtn = styled.div`
  display: flex;
  align-items: center;
  justify-content: center;
  gap: 4px;
  width: 36px;
  height: 22px;
  background: #ebebeb;
  border: 1px solid #d8d8d8;
  border-radius: 3px;
`;

const SmallCaret = styled.span`
  border-left: 2.5px solid transparent;
  border-right: 2.5px solid transparent;
  border-top: 4px solid #666;
`;

const PaneBtn = styled.div`
  display: flex;
  align-items: center;
  justify-content: center;
  width: ${(p) => p.$w}px;
  height: 20px;
  background: #fff;
  border-radius: 5px;
  box-shadow: 0 0.5px 1.5px rgba(0, 0, 0, 0.35);
  font-size: 11px;
  color: #333;
`;

const Results = styled.div`
  flex: 1;
  min-height: 0;
  padding: 10px 10px 0;
  overflow: hidden;
  background: #fff;
`;

const Result = styled.div`
  height: 30px;
  padding: 1px 8px;
  border-radius: 4px;
  font-size: 11px;
  line-height: 14px;
  letter-spacing: 0.1px;
  color: #333;
  background: ${(p) => (p.$selected ? "#dcdcdc" : p.$blank ? "#fff" : "#f3f5f5")};
`;

const Mark = styled.b`
  background: #ffd800;
  color: #222;
`;

const Workspace = styled.div`
  display: flex;
  flex-direction: column;
  flex: 1;
  min-width: 0;
`;

const WorkTop = styled.div`
  display: flex;
  flex: 1;
  min-height: 0;
`;

const Canvas = styled.div`
  display: flex;
  justify-content: center;
  flex: 1;
  padding-top: 13px;
  overflow: hidden;
  background: #ebebeb;
`;

const Page = styled.div`
  width: 612px;
  height: 100%;
  padding: 71px 0 0 71px;
  background: #fff;
  border: 1px solid #c8c8c8;
  border-bottom: none;
`;

const DocLine = styled.p`
  margin: 0;
  font-family: Lato, sans-serif;
  font-size: 11.35px;
  line-height: 15px;
  color: #111;
`;

const DocMark = styled.span`
  background: #f3d48c;
  color: #3a3340;
`;

const VScroll = styled.div`
  flex: 0 0 14px;
  padding: 3px 3px 0;
  background: #f7f7f7;
`;

const Thumb = styled.div`
  height: 626px;
  border-radius: 4px;
  background: #c4c4c4;
`;

const HScroll = styled.div`
  flex: 0 0 15px;
  background: #f7f7f7;
  border-top: 1px solid #e6e6e6;
`;

const Arrow = styled.svg`
  position: absolute;
  left: 227px;
  top: 116px;
`;

const StatusBar = styled.footer`
  display: flex;
  align-items: center;
  justify-content: space-between;
  flex: 0 0 23px;
  padding-left: 24px;
  background: linear-gradient(#dedede, #d8d8d8);
  border-top: 1px solid #a9a9a9;
  font-size: 12px;
  letter-spacing: 0.05px;
  color: #5e5e5e;
`;

const StatusLeft = styled.div`
  display: flex;
  gap: 21px;
  padding-bottom: 1px;
`;

const StatusRight = styled.div`
  display: flex;
  align-items: center;
  height: 100%;
  padding-right: 24px;
`;

const FocusText = styled.span`
  margin: 0 10px 1px 7px;
`;

const ViewBtn = styled.div`
  display: flex;
  align-items: center;
  justify-content: center;
  width: ${(p) => p.$w || 37}px;
  height: 100%;
  background: ${(p) => (p.$active ? "#a9a9a9" : "transparent")};
`;

const ZoomSign = styled.span`
  width: 11px;
  margin-left: ${(p) => p.$ml || 0}px;
  font-size: 15px;
  font-weight: 600;
  line-height: 1;
  text-align: center;
  color: #555;
`;

const Slider = styled.div`
  position: relative;
  width: 100px;
  height: 4px;
  margin: 0 6px;
  border-radius: 2px;
  background: #a0a0a0;
`;

const SliderKnob = styled.span`
  position: absolute;
  left: 42px;
  top: -6px;
  width: 16px;
  height: 16px;
  border-radius: 50%;
  background: #fff;
  box-shadow: 0 0.5px 1.5px rgba(0, 0, 0, 0.4);
`;

const ZoomValue = styled.span`
  margin: 0 0 1px 15px;
`;
